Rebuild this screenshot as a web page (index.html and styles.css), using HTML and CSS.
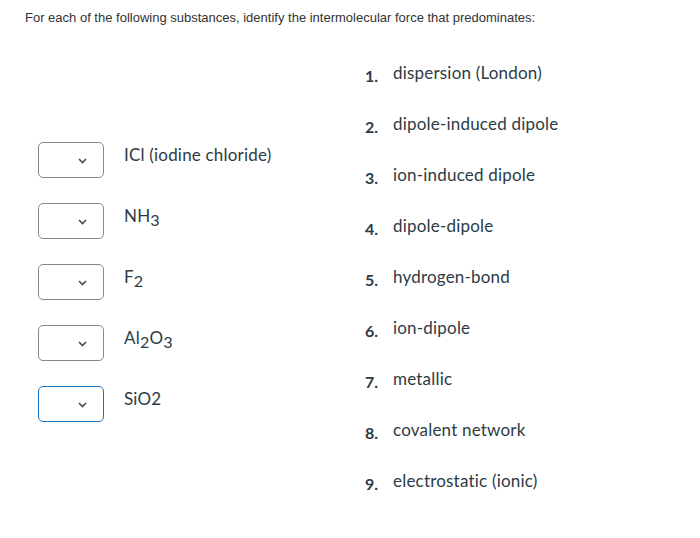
FILE: index.html
```html
<!DOCTYPE html>
<html>
<head>
<meta charset="utf-8">
<link rel="stylesheet" href="styles.css">
</head>
<body>
<div class="prompt">For each of the following substances, identify the intermolecular force that predominates:</div>
<div class="matching">
  <div class="questions">
    <div class="row">
      <div class="select"><svg width="9" height="6" viewBox="0 0 9 6"><path d="M1 1 L4.5 4.5 L8 1" fill="none" stroke="#4a4a4a" stroke-width="1.6"/></svg></div>
      <div class="label">ICl (iodine chloride)</div>
    </div>
    <div class="row">
      <div class="select"><svg width="9" height="6" viewBox="0 0 9 6"><path d="M1 1 L4.5 4.5 L8 1" fill="none" stroke="#4a4a4a" stroke-width="1.6"/></svg></div>
      <div class="label">NH<sub>3</sub></div>
    </div>
    <div class="row">
      <div class="select"><svg width="9" height="6" viewBox="0 0 9 6"><path d="M1 1 L4.5 4.5 L8 1" fill="none" stroke="#4a4a4a" stroke-width="1.6"/></svg></div>
      <div class="label">F<sub>2</sub></div>
    </div>
    <div class="row">
      <div class="select"><svg width="9" height="6" viewBox="0 0 9 6"><path d="M1 1 L4.5 4.5 L8 1" fill="none" stroke="#4a4a4a" stroke-width="1.6"/></svg></div>
      <div class="label">Al<sub>2</sub>O<sub>3</sub></div>
    </div>
    <div class="row">
      <div class="select focused"><svg width="9" height="6" viewBox="0 0 9 6"><path d="M1 1 L4.5 4.5 L8 1" fill="none" stroke="#4a4a4a" stroke-width="1.6"/></svg></div>
      <div class="label">SiO2</div>
    </div>
  </div>
  <ol class="answers">
    <li><span class="num">1.</span><span>dispersion (London)</span></li>
    <li><span class="num">2.</span><span>dipole-induced dipole</span></li>
    <li><span class="num">3.</span><span>ion-induced dipole</span></li>
    <li><span class="num">4.</span><span>dipole-dipole</span></li>
    <li><span class="num">5.</span><span>hydrogen-bond</span></li>
    <li><span class="num">6.</span><span>ion-dipole</span></li>
    <li><span class="num">7.</span><span>metallic</span></li>
    <li><span class="num">8.</span><span>covalent network</span></li>
    <li><span class="num">9.</span><span>electrostatic (ionic)</span></li>
  </ol>
</div>
</body>
</html>
```
FILE: styles.css
```css
html, body {
  margin: 0;
  padding: 0;
  background: #ffffff;
}
.prompt {
  font-family: "Liberation Sans", Arial, sans-serif;
  font-size: 13px;
  color: #333333;
  padding: 10px 0 0 25px;
  line-height: 15px;
}
.matching {
  display: flex;
  align-items: flex-start;
  font-family: Lato, "Noto Sans", sans-serif;
  font-size: 17px;
  letter-spacing: 0.2px;
  color: #2d3b45;
}
.questions {
  width: 327px;
  margin-left: 38px;
  margin-top: 117px;
  display: flex;
  flex-direction: column;
  gap: 25px;
}
.row {
  display: flex;
  align-items: flex-start;
  gap: 20px;
}
.select {
  box-sizing: border-box;
  width: 66px;
  height: 36px;
  border: 1px solid #8a8a8a;
  border-radius: 5px;
  display: flex;
  align-items: center;
  justify-content: flex-end;
  padding-right: 16px;
  padding-top: 1px;
}
.select.focused {
  border-color: #1d74c4;
}
.label {
  line-height: 20px;
  padding-top: 3px;
}
.label sub {
  font-size: 0.95em;
  vertical-align: -4px;
  line-height: 0;
}
.answers {
  list-style: none;
  margin: 22px 0 0 0;
  padding: 0;
}
.answers li {
  display: flex;
  line-height: 51px;
  height: 51px;
}
.num {
  width: 28px;
  font-weight: bold;
  font-size: 16px;
  letter-spacing: 0;
  position: relative;
  top: 3px;
}
```
